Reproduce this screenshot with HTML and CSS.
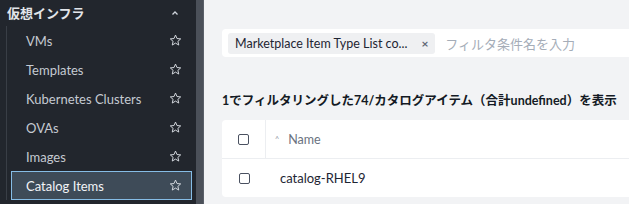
FILE: index.html
```html
<!DOCTYPE html>
<html lang="ja">
<head>
<meta charset="utf-8">
<link rel="stylesheet" href="styles.css">
</head>
<body>
<div class="app">
  <aside class="sidebar">
    <div class="group-head">
      <span class="group-title">仮想インフラ</span>
      <svg class="chev" width="8" height="6" viewBox="0 0 8 6"><path d="M1.5 4.5 L4 2 L6.5 4.5" fill="none" stroke="#cfd4dc" stroke-width="1.3"/></svg>
    </div>
    <ul class="nav">
      <li class="item"><span>VMs</span><svg class="star" viewBox="0 0 12 12"><path d="M6 1 L7.4 4.2 L10.8 4.5 L8.2 6.8 L9 10.2 L6 8.4 L3 10.2 L3.8 6.8 L1.2 4.5 L4.6 4.2 Z"/></svg></li>
      <li class="item"><span>Templates</span><svg class="star" viewBox="0 0 12 12"><path d="M6 1 L7.4 4.2 L10.8 4.5 L8.2 6.8 L9 10.2 L6 8.4 L3 10.2 L3.8 6.8 L1.2 4.5 L4.6 4.2 Z"/></svg></li>
      <li class="item"><span>Kubernetes Clusters</span><svg class="star" viewBox="0 0 12 12"><path d="M6 1 L7.4 4.2 L10.8 4.5 L8.2 6.8 L9 10.2 L6 8.4 L3 10.2 L3.8 6.8 L1.2 4.5 L4.6 4.2 Z"/></svg></li>
      <li class="item"><span>OVAs</span><svg class="star" viewBox="0 0 12 12"><path d="M6 1 L7.4 4.2 L10.8 4.5 L8.2 6.8 L9 10.2 L6 8.4 L3 10.2 L3.8 6.8 L1.2 4.5 L4.6 4.2 Z"/></svg></li>
      <li class="item"><span>Images</span><svg class="star" viewBox="0 0 12 12"><path d="M6 1 L7.4 4.2 L10.8 4.5 L8.2 6.8 L9 10.2 L6 8.4 L3 10.2 L3.8 6.8 L1.2 4.5 L4.6 4.2 Z"/></svg></li>
      <li class="item active"><span>Catalog Items</span><svg class="star" viewBox="0 0 12 12"><path d="M6 1 L7.4 4.2 L10.8 4.5 L8.2 6.8 L9 10.2 L6 8.4 L3 10.2 L3.8 6.8 L1.2 4.5 L4.6 4.2 Z"/></svg></li>
    </ul>
  </aside>
  <div class="scroll-track"></div>
  <main class="main">
    <div class="filter">
      <span class="chip">Marketplace Item Type List co...<span class="chip-x">×</span></span>
      <span class="placeholder">フィルタ条件名を入力</span>
    </div>
    <h2 class="count">1でフィルタリングした74/カタログアイテム（合計undefined）を表示</h2>
    <div class="table">
      <div class="row head">
        <div class="cell check"><span class="box"></span></div>
        <div class="cell name"><span class="sort">˄</span>Name</div>
      </div>
      <div class="row">
        <div class="cell check"><span class="box"></span></div>
        <div class="cell name value">catalog-RHEL9</div>
      </div>
    </div>
  </main>
</div>
</body>
</html>
```

FILE: styles.css
```css
* { box-sizing: border-box; }
html, body { margin: 0; padding: 0; }
body {
  width: 629px;
  height: 204px;
  overflow: hidden;
  font-family: Lato, "Noto Sans CJK JP", sans-serif;
  background: #f2f3f5;
}
.app { display: flex; height: 204px; }
.sidebar {
  width: 196px;
  flex: none;
  background: #22262d;
  color: #c9ced6;
}
.group-head {
  display: flex;
  align-items: center;
  justify-content: space-between;
  height: 27px;
  padding: 0 17px 0 7px;
  margin-top: -1px;
}
.group-title {
  font-size: 13px;
  font-weight: 700;
  color: #e2e5ea;
}
.chev { display: block; }
.nav {
  list-style: none;
  margin: 0 0 0 6px;
  padding: 0;
  border-left: 1px solid #393e46;
}
.item {
  display: flex;
  align-items: center;
  justify-content: space-between;
  height: 29px;
  margin-left: 4px;
  margin-right: 4px;
  padding: 0 9px 0 14px;
  font-size: 13px;
  color: #c5cad2;
  border: 1px solid transparent;
}
.item.active {
  background: #3e4b58;
  border-color: #86bde6;
  color: #f2f4f7;
}
.star {
  width: 13px;
  height: 13px;
  fill: none;
  stroke: #d6dae0;
  stroke-width: 0.9;
  stroke-linejoin: round;
}
.scroll-track {
  width: 8px;
  flex: none;
  background: #4b5059;
  border-right: 1px solid #5b6069;
}
.main {
  flex: 1;
  padding: 29px 0 0 18px;
  min-width: 0;
}
.filter {
  display: flex;
  align-items: center;
  gap: 10px;
  height: 28px;
  background: #fff;
  border-radius: 4px 0 0 4px;
  padding: 0 6px;
}
.chip {
  display: flex;
  align-items: center;
  height: 21px;
  background: #eff0f2;
  border-radius: 3px;
  padding: 0 7px 0 7px;
  font-size: 12.5px;
  color: #1e2533;
  white-space: nowrap;
}
.chip-x {
  margin-left: 14px;
  font-size: 12px;
  font-weight: 700;
  color: #5d6673;
}
.placeholder {
  font-size: 13px;
  color: #a5adb8;
  white-space: nowrap;
}
.count {
  margin: 0;
  padding-top: 35px;
  height: 63px;
  line-height: 18px;
  font-size: 12.5px;
  font-weight: 700;
  color: #141a24;
  white-space: nowrap;
}
.table {
  background: #fff;
  border-radius: 4px 0 0 4px;
  height: 77px;
}
.row {
  display: flex;
  height: 38px;
}
.row.head { border-bottom: 1px solid #eceef1; height: 39px; }
.cell { display: flex; align-items: center; }
.check {
  width: 44px;
  justify-content: center;
}
.head .check { border-right: 1px solid #eceef1; }
.box {
  width: 11px;
  height: 11px;
  border: 1px solid #4a5160;
  border-radius: 2px;
}
.name {
  font-size: 12.5px;
  color: #6a7280;
  padding-left: 9px;
}
.sort {
  font-size: 9px;
  color: #9aa1ab;
  margin-right: 9px;
}
.value {
  color: #1e2533;
  font-size: 13px;
  padding-left: 14px;
}
```
